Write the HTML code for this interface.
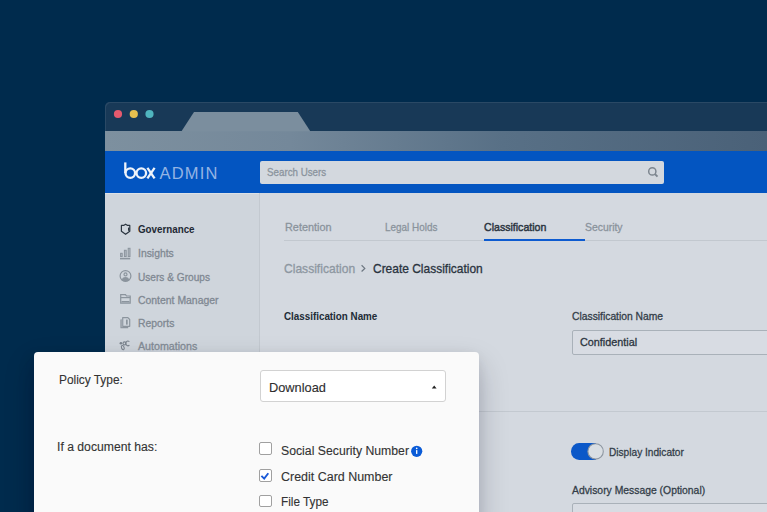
<!DOCTYPE html>
<html><head><meta charset="utf-8">
<style>
html,body{margin:0;padding:0}
body{width:767px;height:512px;overflow:hidden;position:relative;background:#002b4d;font-family:"Liberation Sans",sans-serif}
.a{position:absolute}
.t{position:absolute;white-space:pre;line-height:normal;transform-origin:0 0;font-family:"Liberation Sans",sans-serif}
svg{position:absolute;left:0;top:0;overflow:visible}
</style></head><body>
<!-- window chrome -->
<div class="a" style="left:105px;top:102px;width:700px;height:29px;background:#183957;border-radius:5px 0 0 0;box-shadow:inset 1px 1px 0 #2a4965"></div>
<div class="a" style="left:105px;top:131px;width:662px;height:20px;background:linear-gradient(90deg,#7d909f 0%,#74889a 28%,#587086 60%,#4a6178 100%)"></div>
<!-- main app -->
<div class="a" style="left:105px;top:151px;width:662px;height:42px;background:#0355c1"></div>
<div class="a" style="left:105px;top:193px;width:155px;height:319px;background:#cfd5dc"></div>
<div class="a" style="left:105px;top:193px;width:662px;height:1px;background:#dce1e6"></div>
<div class="a" style="left:259.3px;top:193px;width:1px;height:319px;background:#c3c9d0"></div>
<div class="a" style="left:260.3px;top:193px;width:507px;height:319px;background:#d4d9e0"></div>
<!-- search -->
<div class="a" style="left:259.5px;top:161px;width:404.5px;height:23px;background:#d3d8de;border-radius:2px"></div>
<!-- tabs line -->
<div class="a" style="left:283.7px;top:240.3px;width:484px;height:1px;background:#c2c8cf"></div>
<div class="a" style="left:483.6px;top:239.4px;width:101px;height:2px;background:#0d5bd0"></div>
<!-- inputs right -->
<div class="a" style="left:572px;top:329.7px;width:220px;height:25.6px;box-sizing:border-box;border:1px solid #a9b1b9;background:rgba(255,255,255,0.1);border-radius:2px"></div>
<div class="a" style="left:479px;top:410.8px;width:300px;height:1px;background:#c3c9d0"></div>
<div class="a" style="left:571.3px;top:443.2px;width:24.5px;height:16.4px;border-radius:8.2px 0 0 8.2px;background:#0b58c8"></div>
<div class="a" style="left:572px;top:502.6px;width:220px;height:25px;box-sizing:border-box;border:1px solid #a9b1b9;background:rgba(255,255,255,0.1);border-radius:2px"></div>

<svg width="767" height="512">
  <!-- traffic lights -->
  <circle cx="118" cy="114" r="4.1" fill="#e55a6e"/>
  <circle cx="133.8" cy="114" r="4.1" fill="#e6c04f"/>
  <circle cx="149.5" cy="114" r="4.1" fill="#4fb5bf"/>
  <!-- active tab -->
  <polygon points="181.5,131.2 194,112 297.8,112 310.3,131.2" fill="#7b8e9e"/>
  <!-- box logo -->
  <g fill="none" stroke="#eef3fa" stroke-width="2.3">
    <line x1="125.3" y1="162.4" x2="125.3" y2="173.1"/>
    <circle cx="130.3" cy="173.1" r="4.8"/>
    <circle cx="141.3" cy="173.1" r="4.8"/>
    <line x1="147.4" y1="167.9" x2="154.6" y2="178.4"/>
    <line x1="154.6" y1="167.9" x2="147.4" y2="178.4"/>
  </g>
  <!-- magnifier -->
  <g fill="none" stroke="#7d868f" stroke-width="1.5">
    <circle cx="652.3" cy="171.4" r="3.6"/>
    <line x1="655" y1="174.1" x2="657.5" y2="176.6" stroke-width="1.9"/>
  </g>
  <!-- sidebar icons -->
  <path d="M121.4,225.4 L123.6,225.4 L125.6,224.2 L127.6,225.4 L129.8,225.4 L129.8,231.3 L125.6,234.3 L121.4,231.3 Z" fill="none" stroke="#2b3540" stroke-width="1.2" stroke-linejoin="round"/>
  <rect x="128" y="227.6" width="1.5" height="3.2" fill="#2b3540"/>
  <g fill="#b3bac2" stroke="#8b949d" stroke-width="1">
    <rect x="120.6" y="253.3" width="1.6" height="3.2"/>
    <rect x="124.4" y="250.3" width="1.8" height="6.2"/>
    <rect x="128.2" y="248.3" width="1.8" height="8.2"/>
  </g>
  <rect x="120" y="257.8" width="10.2" height="1.6" fill="#8b949d"/>
  <g fill="none" stroke="#8b949d" stroke-width="1.2">
    <circle cx="125.5" cy="276" r="5.4"/>
    <circle cx="125.5" cy="274.4" r="1.5"/>
  </g>
  <path d="M121.9,280.4 C121.9,278.1 123.4,277.1 125.5,277.1 C127.6,277.1 129.1,278.1 129.1,280.4 Q125.5,282.4 121.9,280.4 Z" fill="#8b949d"/>
  <g fill="none" stroke="#8b949d" stroke-width="1.2">
    <path d="M120.7,303.2 L120.7,294.6 L125.5,294.6 L126.5,296 L130.2,296 L130.2,303.2 Z"/>
    <line x1="120.7" y1="297.6" x2="130.2" y2="297.6"/>
  </g>
  <rect x="121.5" y="301" width="8" height="1.4" fill="#8b949d"/>
  <g fill="none" stroke="#8b949d" stroke-width="1.2" stroke-linejoin="round">
    <path d="M122.7,317.7 L127.9,317.7 L129.7,319.5 L129.7,326.3 L122.7,326.3 Z"/>
    <path d="M121,319.4 L121,327.7 L128.2,327.7"/>
  </g>
  <rect x="121.4" y="319.4" width="1.3" height="8" fill="#9aa2ab"/>
  <rect x="126" y="319.6" width="1.7" height="5" fill="#8b949d"/>
  <g fill="none" stroke="#7b848e" stroke-width="1.1">
    <circle cx="124.5" cy="343.4" r="1.5"/>
    <path d="M129.4,341.6 A2.3,2.3 0 1 0 129.4,345.2"/>
    <ellipse cx="122.8" cy="347.6" rx="1.3" ry="2.2" transform="rotate(-20 122.8 347.6)"/>
  </g>
  <circle cx="120.9" cy="343.3" r="1.3" fill="#7b848e"/>
  <!-- chevron -->
  <path d="M361.6,265.3 L364.8,268.4 L361.6,271.5" fill="none" stroke="#6d7781" stroke-width="1.2"/>
  <!-- toggle knob -->
  <circle cx="595.6" cy="451.4" r="7.7" fill="#d9dee3" stroke="#8e97a1" stroke-width="1.1"/>
</svg>

<!-- card -->
<div class="a" style="left:34px;top:351.7px;width:445px;height:175px;background:#fafafa;border-radius:4px;box-shadow:0 14px 30px rgba(0,10,30,0.22),-3px 6px 14px rgba(0,10,30,0.12)"></div>
<div class="a" style="left:260px;top:370px;width:185.5px;height:31.5px;box-sizing:border-box;border:1px solid #d2d2d2;background:#fff;border-radius:3px"></div>
<div class="a" style="left:259px;top:442.3px;width:12.6px;height:12.4px;box-sizing:border-box;border:1.3px solid #a0a0a0;background:#fff;border-radius:2px"></div>
<div class="a" style="left:259px;top:469.2px;width:12.6px;height:12.4px;box-sizing:border-box;border:1.3px solid #a0a0a0;background:#fff;border-radius:2px"></div>
<div class="a" style="left:259px;top:494.7px;width:12.6px;height:12.4px;box-sizing:border-box;border:1.3px solid #a0a0a0;background:#fff;border-radius:2px"></div>
<svg width="767" height="512">
  <polygon points="431.8,388.6 434.2,385.4 436.6,388.6" fill="#222"/>
  <path d="M261.4,475.8 L264.2,478.6 L268.3,473.2" fill="none" stroke="#1a5ad8" stroke-width="1.9"/>
  <circle cx="416.7" cy="451.3" r="5.6" fill="#0a5bd7"/>
  <circle cx="416.7" cy="448.4" r="0.8" fill="#fff"/>
  <rect x="416.05" y="450.1" width="1.3" height="3.8" fill="#fff"/>
</svg>
<span class="t" style="left:159.50px;top:164.00px;font-size:16.5px;font-weight:400;color:#94b4e4;letter-spacing:1.188px;-webkit-text-stroke:0px currentColor;">ADMIN</span>
<span class="t" style="left:267.40px;top:166.00px;font-size:11px;font-weight:400;color:#8b949d;transform:scaleX(0.8878);-webkit-text-stroke:0.3px currentColor;">Search Users</span>
<span class="t" style="left:138.00px;top:223.30px;font-size:10.5px;font-weight:700;color:#1f2a35;transform:scaleX(0.9317);-webkit-text-stroke:0.05px currentColor;">Governance</span>
<span class="t" style="left:138.40px;top:247.00px;font-size:10.5px;font-weight:400;color:#7f8892;transform:scaleX(0.9879);-webkit-text-stroke:0.3px currentColor;">Insights</span>
<span class="t" style="left:138.10px;top:270.50px;font-size:10.5px;font-weight:400;color:#7f8892;transform:scaleX(0.9632);-webkit-text-stroke:0.3px currentColor;">Users &amp; Groups</span>
<span class="t" style="left:138.00px;top:293.70px;font-size:10.5px;font-weight:400;color:#7f8892;transform:scaleX(0.9922);-webkit-text-stroke:0.3px currentColor;">Content Manager</span>
<span class="t" style="left:138.00px;top:316.90px;font-size:10.5px;font-weight:400;color:#7f8892;transform:scaleX(0.9886);-webkit-text-stroke:0.3px currentColor;">Reports</span>
<span class="t" style="left:138.00px;top:340.20px;font-size:10.5px;font-weight:400;color:#7f8892;transform:scaleX(1.0152);-webkit-text-stroke:0.3px currentColor;">Automations</span>
<span class="t" style="left:284.50px;top:221.00px;font-size:11.5px;font-weight:400;color:#8a939c;transform:scaleX(0.9440);-webkit-text-stroke:0.3px currentColor;">Retention</span>
<span class="t" style="left:384.90px;top:221.00px;font-size:11.5px;font-weight:400;color:#8a939c;transform:scaleX(0.8625);-webkit-text-stroke:0.3px currentColor;">Legal Holds</span>
<span class="t" style="left:483.60px;top:221.00px;font-size:11.5px;font-weight:400;color:#2a3440;transform:scaleX(0.9205);-webkit-text-stroke:0.45px currentColor;">Classification</span>
<span class="t" style="left:584.70px;top:221.00px;font-size:11.5px;font-weight:400;color:#8a939c;transform:scaleX(0.9045);-webkit-text-stroke:0.3px currentColor;">Security</span>
<span class="t" style="left:283.60px;top:260.90px;font-size:13px;font-weight:400;color:#8d97a1;transform:scaleX(0.9286);-webkit-text-stroke:0.3px currentColor;">Classification</span>
<span class="t" style="left:372.50px;top:260.90px;font-size:13px;font-weight:400;color:#29333e;transform:scaleX(0.9203);-webkit-text-stroke:0.3px currentColor;">Create Classification</span>
<span class="t" style="left:283.60px;top:310.30px;font-size:11px;font-weight:700;color:#222c37;transform:scaleX(0.8925);-webkit-text-stroke:0.05px currentColor;">Classification Name</span>
<span class="t" style="left:572.10px;top:310.20px;font-size:11px;font-weight:400;color:#333d48;transform:scaleX(0.9373);-webkit-text-stroke:0.3px currentColor;">Classification Name</span>
<span class="t" style="left:580.20px;top:336.40px;font-size:11px;font-weight:400;color:#2b3540;transform:scaleX(0.9835);-webkit-text-stroke:0.3px currentColor;">Confidential</span>
<span class="t" style="left:608.50px;top:446.30px;font-size:11.5px;font-weight:400;color:#333d48;transform:scaleX(0.8805);-webkit-text-stroke:0.3px currentColor;">Display Indicator</span>
<span class="t" style="left:572.00px;top:483.80px;font-size:11.5px;font-weight:400;color:#333d48;transform:scaleX(0.9018);-webkit-text-stroke:0.3px currentColor;">Advisory Message (Optional)</span>
<span class="t" style="left:58.60px;top:373.30px;font-size:12px;font-weight:400;color:#333333;transform:scaleX(0.9898);-webkit-text-stroke:0.12px currentColor;">Policy Type:</span>
<span class="t" style="left:268.55px;top:379.50px;font-size:13.5px;font-weight:400;color:#2e2e2e;transform:scaleX(0.9482);-webkit-text-stroke:0.12px currentColor;">Download</span>
<span class="t" style="left:57.42px;top:439.70px;font-size:12.5px;font-weight:400;color:#333333;transform:scaleX(0.9757);-webkit-text-stroke:0.12px currentColor;">If a document has:</span>
<span class="t" style="left:280.50px;top:443.60px;font-size:12px;font-weight:400;color:#333333;transform:scaleX(1.0209);-webkit-text-stroke:0.12px currentColor;">Social Security Number</span>
<span class="t" style="left:280.50px;top:469.50px;font-size:12px;font-weight:400;color:#333333;transform:scaleX(1.0385);-webkit-text-stroke:0.12px currentColor;">Credit Card Number</span>
<span class="t" style="left:280.50px;top:494.60px;font-size:12px;font-weight:400;color:#333333;transform:scaleX(0.9814);-webkit-text-stroke:0.12px currentColor;">File Type</span>
</body></html>
